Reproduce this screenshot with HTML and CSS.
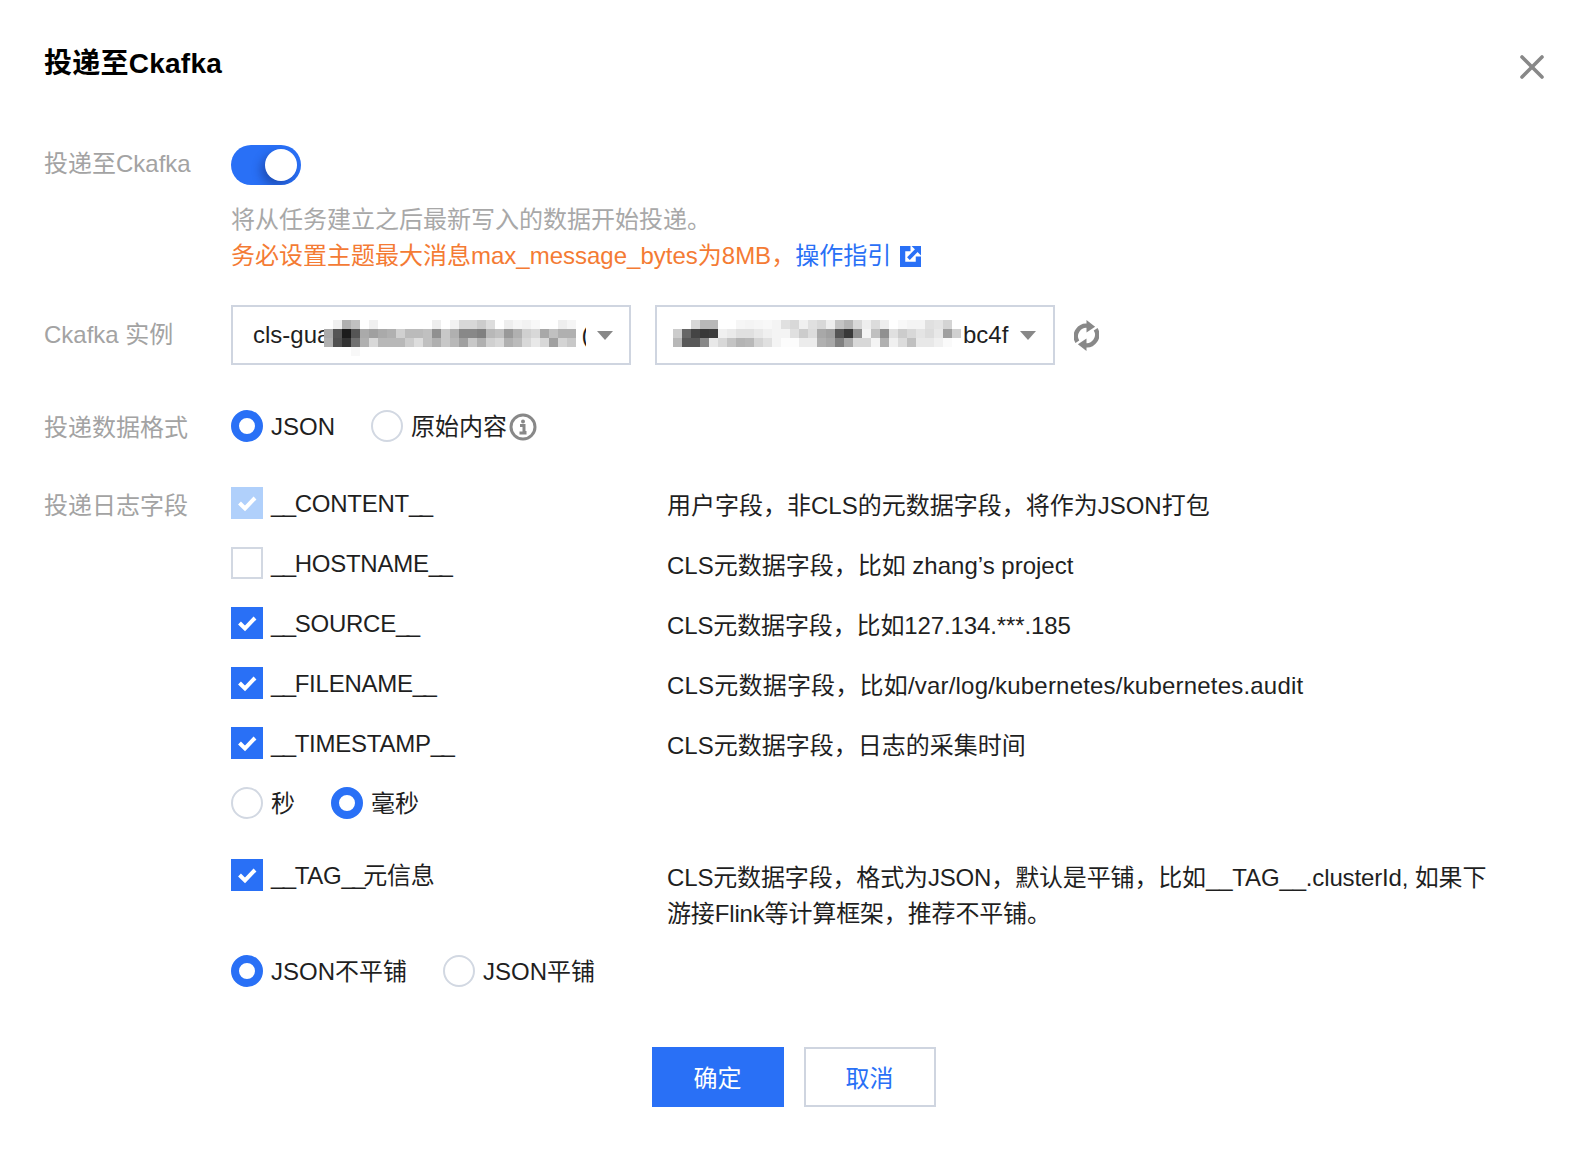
FILE: index.html
```html
<!DOCTYPE html>
<html lang="zh-CN">
<head>
<meta charset="utf-8">
<title>投递至Ckafka</title>
<link rel="stylesheet" href="styles.css">
</head>
<body>
<div class="dialog">
  <header class="head">
    <h1 class="title">投递至Ckafka</h1>
    <svg class="close" viewBox="0 0 24 24"><path d="M2 2 22 22M22 2 2 22"/></svg>
  </header>

  <div class="row row-switch">
    <div class="label">投递至Ckafka</div>
    <div class="control">
      <div class="switch"><span class="knob"></span></div>
      <p class="note">将从任务建立之后最新写入的数据开始投递。</p>
      <p class="note warn">务必设置主题最大消息max_message_bytes为8MB，<a class="link">操作指引<svg class="ext" viewBox="0 0 20 20"><path class="ext-frame" d="M10 2.5H2.5V17.5H17.5V10"/><path class="ext-arrow" d="M8 12 16 4"/><path class="ext-head" d="M11 0H20V9Z"/></svg></a></p>
    </div>
  </div>

  <div class="row row-select">
    <div class="label">Ckafka 实例</div>
    <div class="control selects">
      <div class="select">
        <div class="value">
          <span class="plain">cls-gua</span>
          <svg class="mosaic m1" viewBox="0 0 252 36">
            <rect x="9" y="0" fill="#f0f0f0"/><rect x="18" y="0" fill="#b0b0b0"/><rect x="27" y="0" fill="#c0c0c0"/><rect x="45" y="0" fill="#f0f0f0"/><rect x="108" y="0" fill="#eeeeee"/><rect x="126" y="0" fill="#f2f2f2"/><rect x="135" y="0" fill="#d8d8d8"/><rect x="144" y="0" fill="#d8d8d8"/><rect x="153" y="0" fill="#cccccc"/><rect x="162" y="0" fill="#dddddd"/><rect x="180" y="0" fill="#eeeeee"/><rect x="189" y="0" fill="#f6f6f6"/><rect x="198" y="0" fill="#f2f2f2"/><rect x="207" y="0" fill="#f8f8f8"/><rect x="234" y="0" fill="#eeeeee"/><rect x="243" y="0" fill="#f5f5f5"/>
            <rect x="0" y="9" fill="#aaaaaa"/><rect x="9" y="9" fill="#555555"/><rect x="18" y="9" fill="#1c1c1c"/><rect x="27" y="9" fill="#555555"/><rect x="36" y="9" fill="#aaaaaa"/><rect x="45" y="9" fill="#a0a0a0"/><rect x="54" y="9" fill="#aaaaaa"/><rect x="63" y="9" fill="#b0b0b0"/><rect x="72" y="9" fill="#d0d0d0"/><rect x="81" y="9" fill="#bbbbbb"/><rect x="90" y="9" fill="#bbbbbb"/><rect x="99" y="9" fill="#c0c0c0"/><rect x="108" y="9" fill="#909090"/><rect x="117" y="9" fill="#c8c8c8"/><rect x="126" y="9" fill="#b0b0b0"/><rect x="135" y="9" fill="#888888"/><rect x="144" y="9" fill="#888888"/><rect x="153" y="9" fill="#808080"/><rect x="162" y="9" fill="#b8b8b8"/><rect x="171" y="9" fill="#c0c0c0"/><rect x="180" y="9" fill="#999999"/><rect x="189" y="9" fill="#b0b0b0"/><rect x="198" y="9" fill="#d0d0d0"/><rect x="207" y="9" fill="#d8d8d8"/><rect x="216" y="9" fill="#a8a8a8"/><rect x="225" y="9" fill="#c0c0c0"/><rect x="234" y="9" fill="#b0b0b0"/><rect x="243" y="9" fill="#b0b0b0"/>
            <rect x="0" y="18" fill="#b0b0b0"/><rect x="9" y="18" fill="#505050"/><rect x="18" y="18" fill="#333333"/><rect x="27" y="18" fill="#707070"/><rect x="36" y="18" fill="#b0b0b0"/><rect x="45" y="18" fill="#d8d8d8"/><rect x="54" y="18" fill="#b8b8b8"/><rect x="63" y="18" fill="#b8b8b8"/><rect x="72" y="18" fill="#b8b8b8"/><rect x="81" y="18" fill="#cccccc"/><rect x="90" y="18" fill="#dddddd"/><rect x="99" y="18" fill="#c0c0c0"/><rect x="108" y="18" fill="#b0b0b0"/><rect x="117" y="18" fill="#c8c8c8"/><rect x="126" y="18" fill="#b8b8b8"/><rect x="135" y="18" fill="#a0a0a0"/><rect x="144" y="18" fill="#c8c8c8"/><rect x="153" y="18" fill="#b0b0b0"/><rect x="162" y="18" fill="#d0d0d0"/><rect x="171" y="18" fill="#d8d8d8"/><rect x="180" y="18" fill="#b0b0b0"/><rect x="189" y="18" fill="#bbbbbb"/><rect x="198" y="18" fill="#d8d8d8"/><rect x="207" y="18" fill="#e8e8e8"/><rect x="216" y="18" fill="#d8d8d8"/><rect x="225" y="18" fill="#a0a0a0"/><rect x="234" y="18" fill="#d4d4d4"/><rect x="243" y="18" fill="#c8c8c8"/>
            <rect x="27" y="27" fill="#f8f8f8"/>
          </svg>
          <span class="plain paren">(</span>
        </div>
        <span class="caret"></span>
      </div>
      <div class="select">
        <div class="value value-second">
          <svg class="mosaic m2" viewBox="0 0 288 36">
            <rect x="18" y="0" fill="#d8d8d8"/><rect x="27" y="0" fill="#b8b8b8"/><rect x="36" y="0" fill="#b8b8b8"/><rect x="63" y="0" fill="#f6f6f6"/><rect x="72" y="0" fill="#f4f4f4"/><rect x="81" y="0" fill="#f6f6f6"/><rect x="90" y="0" fill="#f8f8f8"/><rect x="99" y="0" fill="#f4f4f4"/><rect x="108" y="0" fill="#e0e0e0"/><rect x="117" y="0" fill="#d8d8d8"/><rect x="126" y="0" fill="#f0f0f0"/><rect x="135" y="0" fill="#e0e0e0"/><rect x="144" y="0" fill="#d8d8d8"/><rect x="153" y="0" fill="#eeeeee"/><rect x="162" y="0" fill="#c4c4c4"/><rect x="171" y="0" fill="#b4b4b4"/><rect x="180" y="0" fill="#d8d8d8"/><rect x="189" y="0" fill="#eeeeee"/><rect x="198" y="0" fill="#dcdcdc"/><rect x="207" y="0" fill="#eeeeee"/><rect x="225" y="0" fill="#f8f8f8"/><rect x="234" y="0" fill="#f4f4f4"/><rect x="243" y="0" fill="#f4f4f4"/><rect x="252" y="0" fill="#e0e0e0"/><rect x="261" y="0" fill="#e4e4e4"/><rect x="270" y="0" fill="#d4d4d4"/>
            <rect x="0" y="9" fill="#cccccc"/><rect x="9" y="9" fill="#666666"/><rect x="18" y="9" fill="#444444"/><rect x="27" y="9" fill="#383838"/><rect x="36" y="9" fill="#3c3c3c"/><rect x="45" y="9" fill="#f0f0f0"/><rect x="54" y="9" fill="#eaeaea"/><rect x="63" y="9" fill="#e0e0e0"/><rect x="72" y="9" fill="#e0e0e0"/><rect x="81" y="9" fill="#e8e8e8"/><rect x="90" y="9" fill="#f0f0f0"/><rect x="99" y="9" fill="#f4f4f4"/><rect x="108" y="9" fill="#f4f4f4"/><rect x="117" y="9" fill="#e0e0e0"/><rect x="126" y="9" fill="#cccccc"/><rect x="135" y="9" fill="#dcdcdc"/><rect x="144" y="9" fill="#a8a8a8"/><rect x="153" y="9" fill="#a0a0a0"/><rect x="162" y="9" fill="#555555"/><rect x="171" y="9" fill="#383838"/><rect x="180" y="9" fill="#909090"/><rect x="189" y="9" fill="#f4f4f4"/><rect x="198" y="9" fill="#c0c0c0"/><rect x="207" y="9" fill="#909090"/><rect x="216" y="9" fill="#e0e0e0"/><rect x="225" y="9" fill="#cccccc"/><rect x="234" y="9" fill="#d8d8d8"/><rect x="243" y="9" fill="#e4e4e4"/><rect x="252" y="9" fill="#dcdcdc"/><rect x="261" y="9" fill="#e8e8e8"/><rect x="270" y="9" fill="#a0a0a0"/><rect x="279" y="9" fill="#d0d0d0"/>
            <rect x="0" y="18" fill="#b8b8b8"/><rect x="9" y="18" fill="#585858"/><rect x="18" y="18" fill="#585858"/><rect x="27" y="18" fill="#888888"/><rect x="36" y="18" fill="#e8e8e8"/><rect x="45" y="18" fill="#d8d8d8"/><rect x="54" y="18" fill="#c4c4c4"/><rect x="63" y="18" fill="#b4b4b4"/><rect x="72" y="18" fill="#b8b8b8"/><rect x="81" y="18" fill="#d4d4d4"/><rect x="90" y="18" fill="#e0e0e0"/><rect x="99" y="18" fill="#f4f4f4"/><rect x="108" y="18" fill="#fcfcfc"/><rect x="117" y="18" fill="#fcfcfc"/><rect x="126" y="18" fill="#ececec"/><rect x="135" y="18" fill="#ececec"/><rect x="144" y="18" fill="#b0b0b0"/><rect x="153" y="18" fill="#a8a8a8"/><rect x="162" y="18" fill="#808080"/><rect x="171" y="18" fill="#a8a8a8"/><rect x="180" y="18" fill="#d8d8d8"/><rect x="189" y="18" fill="#d8d8d8"/><rect x="198" y="18" fill="#f4f4f4"/><rect x="207" y="18" fill="#b0b0b0"/><rect x="216" y="18" fill="#f0f0f0"/><rect x="225" y="18" fill="#dcdcdc"/><rect x="234" y="18" fill="#c0c0c0"/><rect x="243" y="18" fill="#e8e8e8"/><rect x="252" y="18" fill="#e8e8e8"/><rect x="261" y="18" fill="#f0f0f0"/><rect x="270" y="18" fill="#fafafa"/>
          </svg>
          <span class="plain">bc4f</span>
        </div>
        <span class="caret"></span>
      </div>
      <svg class="refresh" viewBox="0 0 26 32">
        <path class="ref-arc" d="M3.5 22.5A11 11 0 0 1 15 6"/>
        <path class="ref-arrow" d="M13 0 22 7 13 13Z"/>
        <path class="ref-arc" d="M22.5 9.5A11 11 0 0 1 11 26"/>
        <path class="ref-arrow" d="M13 19 4 25 13 32Z"/>
      </svg>
    </div>
  </div>

  <div class="row row-format">
    <div class="label">投递数据格式</div>
    <div class="control options">
      <label class="option gap-json"><span class="radio on"></span>JSON</label>
      <label class="option"><span class="radio"></span>原始内容<svg class="info" viewBox="0 0 28 28"><circle class="info-ring" cx="14" cy="14" r="12"/><circle class="info-dot" cx="14" cy="8.5" r="2"/><path class="info-i" d="M11 12.5H15V19.5H17.5M10.5 20H17.5"/></svg></label>
    </div>
  </div>

  <div class="row row-fields">
    <div class="label">投递日志字段</div>
    <div class="fields">
      <div class="field">
        <label class="option"><span class="check disabled"><svg viewBox="0 0 32 32"><path d="M8.5 16 14 21.5 24 11"/></svg></span><span class="us">__</span>CONTENT<span class="us">__</span></label>
        <div class="desc">用户字段，非CLS的元数据字段，将作为JSON打包</div>
      </div>
      <div class="field">
        <label class="option"><span class="check"></span><span class="us">__</span>HOSTNAME<span class="us">__</span></label>
        <div class="desc">CLS元数据字段，比如 zhang’s project</div>
      </div>
      <div class="field">
        <label class="option"><span class="check on"><svg viewBox="0 0 32 32"><path d="M8.5 16 14 21.5 24 11"/></svg></span><span class="us">__</span>SOURCE<span class="us">__</span></label>
        <div class="desc desc-num">CLS元数据字段，比如127.134.***.185</div>
      </div>
      <div class="field">
        <label class="option"><span class="check on"><svg viewBox="0 0 32 32"><path d="M8.5 16 14 21.5 24 11"/></svg></span><span class="us">__</span>FILENAME<span class="us">__</span></label>
        <div class="desc desc-path">CLS元数据字段，比如/var/log/kubernetes/kubernetes.audit</div>
      </div>
      <div class="field">
        <label class="option"><span class="check on"><svg viewBox="0 0 32 32"><path d="M8.5 16 14 21.5 24 11"/></svg></span><span class="us">__</span>TIMESTAMP<span class="us">__</span></label>
        <div class="desc">CLS元数据字段，日志的采集时间</div>
      </div>
      <div class="options sub-time">
        <label class="option gap-sec"><span class="radio"></span>秒</label>
        <label class="option"><span class="radio on"></span>毫秒</label>
      </div>
      <div class="field field-tag">
        <label class="option"><span class="check on"><svg viewBox="0 0 32 32"><path d="M8.5 16 14 21.5 24 11"/></svg></span><span class="us">__</span>TAG<span class="us">__</span>元信息</label>
        <div class="desc desc-tag">CLS元数据字段，格式为JSON，默认是平铺，比如__TAG__.clusterId, 如果下游接Flink等计算框架，推荐不平铺。</div>
      </div>
      <div class="options sub-tag">
        <label class="option gap-flat"><span class="radio on"></span>JSON不平铺</label>
        <label class="option"><span class="radio"></span>JSON平铺</label>
      </div>
    </div>
  </div>

  <footer class="actions">
    <button class="btn primary">确定</button>
    <button class="btn">取消</button>
  </footer>
</div>
</body>
</html>
```

FILE: styles.css
```css
* { box-sizing: border-box; }
html, body { margin: 0; padding: 0; background: #fff; }
body {
  font-family: "Liberation Sans", "Noto Sans CJK SC", sans-serif;
  font-size: 24px;
  color: #1f1f1f;
}
.dialog { width: 1592px; height: 1154px; padding: 43px 48px 0 44px; }
.head { display: flex; justify-content: space-between; align-items: flex-start; height: 40px; }
.title { margin: 1px 0 -1px; font-size: 28px; line-height: 40px; font-weight: 700; letter-spacing: .25px; color: #000; }
.close { width: 24px; height: 24px; margin-top: 12px; fill: none; stroke: #888; stroke-width: 3.6; stroke-linecap: round; }

.row { display: flex; }
.label { width: 187px; flex: none; color: #a3a3a3; line-height: 38px; }
.control { flex: 1; }

.row-switch { margin-top: 62px; }
.switch { position: relative; width: 70px; height: 40px; border-radius: 20px; background: #2970f6; overflow: hidden; }
.knob { position: absolute; top: 4px; right: 4px; width: 32px; height: 32px; border-radius: 50%; background: #fff; box-shadow: -4px 5px 10px rgba(20, 40, 110, .45); }
.note { margin: 0; line-height: 36px; color: #a8a8a8; position: relative; top: 1px; }
.note:first-of-type { margin-top: 16px; }
.warn { color: #f47b34; }
.link { color: #2970f6; }
.ext { width: 21px; height: 21px; margin-left: 9px; vertical-align: -3px; }
.ext-frame { fill: none; stroke: #2970f6; stroke-width: 5; }
.ext-arrow { fill: none; stroke: #2970f6; stroke-width: 3.6; }
.ext-head { fill: #2970f6; }

.row-select { margin-top: 32px; }
.row-select .label { line-height: 60px; }
.selects { display: flex; align-items: center; }
.select { display: flex; align-items: center; width: 400px; height: 60px; border: 2px solid #cfd5e0; margin-right: 24px; padding-left: 20px; overflow: hidden; flex: none; }
.select + .select { margin-right: 19px; padding-left: 16px; }
.value { display: flex; align-items: center; width: 333px; flex: none; overflow: hidden; white-space: nowrap; }
.value-second { width: 337px; }
.plain { flex: none; }
.paren { margin-left: 5px; }
.mosaic { flex: none; height: 36px; margin-top: 6px; background: #fff; }
.mosaic rect { width: 9px; height: 9px; }
.m1 { width: 252px; margin-left: -6px; }
.m2 { width: 288px; margin-right: 2px; }
.caret { flex: none; width: 0; height: 0; margin-left: 11px; border-left: 8px solid transparent; border-right: 8px solid transparent; border-top: 9px solid #888; }
.value-second + .caret { margin-left: 10px; }
.refresh { width: 25px; height: 31px; flex: none; }
.ref-arc { fill: none; stroke: #888; stroke-width: 4.6; }
.ref-arrow { fill: #888; }

.options { display: flex; align-items: center; }
.option { display: flex; align-items: flex-start; height: 32px; line-height: 33px; white-space: nowrap; color: #1f1f1f; }
.radio { flex: none; width: 32px; height: 32px; margin-right: 8px; border-radius: 50%; border: 2px solid #d2d8e2; background: #fff; }
.radio.on { border: 8px solid #2970f6; }
.check { flex: none; width: 32px; height: 32px; margin-right: 8px; border: 2px solid #d2d8e2; background: #fff; }
.check svg { display: block; width: 32px; height: 32px; fill: none; stroke: #fff; stroke-width: 4; }
.check.on { border: 0; background: #2970f6; }
.check.disabled { border: 0; background: #b0d0fb; }
.us { letter-spacing: -1.5px; }
.us:last-child { letter-spacing: -2.5px; }
.gap-json { margin-right: 36px; }
.row-format { margin-top: 45px; height: 32px; align-items: center; }
.row-format .label { line-height: 36px; height: 32px; }
.info { width: 28px; height: 28px; margin-left: 2px; margin-top: 3px; }
.info-ring { fill: none; stroke: #888; stroke-width: 3; }
.info-dot { fill: #888; }
.info-i { fill: none; stroke: #888; stroke-width: 3; }

.row-fields { margin-top: 45px; }
.row-fields > .label { line-height: 37px; }
.fields { flex: 1; }
.field { display: flex; align-items: flex-start; margin-bottom: 28px; }
.field .option { width: 436px; flex: none; letter-spacing: -.25px; }
.desc { line-height: 36px; margin-top: 1px; height: 31px; width: 830px; }
.desc-path { letter-spacing: .2px; }
.desc-num { letter-spacing: -.12px; }
.desc-tag { letter-spacing: -.15px; }
.sub-time { height: 32px; margin-bottom: 40px; }
.gap-sec { margin-right: 36px; }
.field-tag { margin-bottom: 0; height: 96px; }
.field-tag .desc { height: 72px; }
.sub-tag { height: 32px; }
.gap-flat { margin-right: 36px; }

.actions { display: flex; justify-content: center; gap: 20px; margin-top: 60px; padding-right: 1px; }
.btn { width: 132px; height: 60px; padding: 0 0 2px; border: 2px solid #cfd5e0; background: #fff; color: #2970f6; font: inherit; }
.btn.primary { border-color: #2970f6; background: #2970f6; color: #fff; }
```
